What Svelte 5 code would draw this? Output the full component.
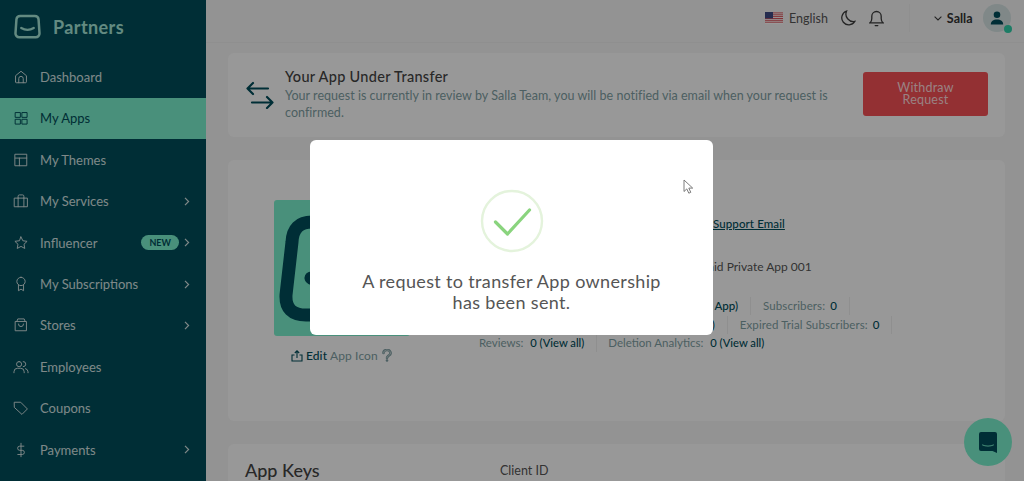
<script>
  const nav = [
    { label: 'Dashboard', icon: 'home' },
    { label: 'My Apps', icon: 'grid', active: true },
    { label: 'My Themes', icon: 'layout' },
    { label: 'My Services', icon: 'case', more: true },
    { label: 'Influencer', icon: 'star', more: true, badge: 'NEW' },
    { label: 'My Subscriptions', icon: 'award', more: true },
    { label: 'Stores', icon: 'bag', more: true },
    { label: 'Employees', icon: 'users' },
    { label: 'Coupons', icon: 'tag' },
    { label: 'Payments', icon: 'dollar', more: true }
  ]

  const icons = {
    home: 'M4 20V10.500L12.500 3.500l8.500 7V20a1.500 1.500 0 0 1-1.500 1.500h-14A1.500 1.500 0 0 1 4 20zM9 21.500V15a3.500 3.500 0 0 1 7 0v6.500',
    grid: 'M4 4h7.500v7.500H4zM14.500 4H22v7.500h-7.500zM4 14.500h7.500V22H4zM14.500 14.500H22V22h-7.500z',
    layout: 'M3.500 3.500h18v18h-18zM3.500 9.500h18M10 9.500v12',
    case: 'M2.500 8h20v13.500h-20zM8 8V5a2 2 0 0 1 2-2h5a2 2 0 0 1 2 2v3M8 8v13.500M17 8v13.500',
    star: 'M12.500 3l2.900 6 6.600.9-4.800 4.600 1.200 6.500-5.900-3.200L6.600 21l1.200-6.500L3 9.900l6.600-.9z',
    award: 'M12.500 2a6.500 6.500 0 1 1 0 13 6.500 6.500 0 0 1 0-13zM8.500 14v9l4-2.500 4 2.500v-9',
    bag: 'M4 7h17v14.500H4zM6 7l1.500-4h10L19 7M8.500 11a4 4 0 0 0 8 0',
    users: 'M9.500 4a4 4 0 1 1 0 8 4 4 0 0 1 0-8zM1.500 21.500v-1.500A5.500 5.500 0 0 1 7 14.500h5a5.500 5.500 0 0 1 5.500 5.500v1.500M16 4a4 4 0 0 1 0 8M19.500 15a5.500 5.500 0 0 1 4 5v1.500',
    tag: 'M2.500 3.500h9.500l10.500 10.500-8.500 8.500L2.500 12z',
    dollar: 'M12.500 2v21M17 6.500H10.500a3 3 0 0 0 0 6.500h4a3 3 0 0 1 0 6.500H7.500'
  }
</script>

<div class="app">
  <aside>
    <div class="brand">
      <svg width="29" height="25" viewBox="0 0 30 26" fill="none">
        <path d="M7.500 2h15a4 4 0 0 1 4 3.600l1 14.400a4 4 0 0 1-4 4.200H6.500a4 4 0 0 1-4-4.200l1-14.400a4 4 0 0 1 4-3.600z" stroke="currentColor" stroke-width="2.600" />
        <path d="M8.500 14.500c4 2.500 9 2.500 13 0" stroke="currentColor" stroke-width="2.400" stroke-linecap="round" />
      </svg>
      <span>Partners</span>
    </div>
    <nav>
      {#each nav as item}
        <div class="item" class:active={item.active}>
          <svg class="ico" width="16" height="16" viewBox="0 0 25 25" fill="none" stroke="currentColor" stroke-width="1.500" stroke-linejoin="round" stroke-linecap="round">
            <path d={icons[item.icon]} />
          </svg>
          <span class="label">{item.label}</span>
          {#if item.badge}<span class="badge">{item.badge}</span>{/if}
          {#if item.more}
            <svg class="chev" width="6" height="9" viewBox="0 0 6 9" fill="none" stroke="currentColor" stroke-width="1.200"><path d="M1 .8l3.600 3.700L1 8.200" /></svg>
          {/if}
        </div>
      {/each}
    </nav>
  </aside>

  <main>
    <header>
      <svg class="flag" width="18" height="12" viewBox="0 0 18 12">
        <rect width="18" height="12" fill="#fff" />
        <path d="M0 .9h18M0 2.800h18M0 4.600h18M0 6.500h18M0 8.300h18M0 10.200h18" stroke="#d8545c" stroke-width="1" />
        <rect width="8" height="6.400" fill="#3e4a84" />
      </svg>
      <span class="lang">English</span>
      <svg class="moon" width="15" height="16" viewBox="0 0 15 16" fill="none" stroke="#3c3c3c" stroke-width="1.300"><path d="M5.500 1.200a7 7 0 1 0 8.300 10.200A7.500 7.500 0 0 1 5.500 1.200z" /></svg>
      <svg class="bell" width="15" height="17" viewBox="0 0 15 17" fill="none" stroke="#3c3c3c" stroke-width="1.300" stroke-linecap="round"><path d="M1 12.800h13c-1.300-1-1.800-2.500-1.800-4.300V6.200a4.700 4.700 0 0 0-9.400 0v2.300c0 1.800-.5 3.300-1.800 4.300zM6.200 15.600h2.600" /></svg>
      <span class="divider"></span>
      <svg class="down" width="8" height="5" viewBox="0 0 8 5" fill="none" stroke="#3c3c3c" stroke-width="1.100"><path d="M.6.700L4 4l3.400-3.300" /></svg>
      <strong>Salla</strong>
      <span class="avatar">
        <svg width="14" height="14" viewBox="0 0 14 14" fill="#004d5a"><circle cx="7" cy="3.800" r="3.300" /><path d="M.8 13.500c0-3.400 2.500-5 6.200-5s6.200 1.600 6.200 5z" /></svg>
        <i></i>
      </span>
    </header>

    <div class="content">
      <section class="card transfer">
        <svg class="arrows" width="28" height="28" viewBox="0 0 28 28" fill="none" stroke="#004d5a" stroke-width="2.200" stroke-linecap="round" stroke-linejoin="round">
          <path d="M22 7.500H1.500M7 2L1.500 7.500 7 13M6 21.500h20.500M21 16l5.500 5.500L21 27" />
        </svg>
        <div class="text">
          <h3>Your App Under Transfer</h3>
          <p>Your request is currently in review by Salla Team, you will be notified via email when your request is confirmed.</p>
        </div>
        <button>Withdraw Request</button>
      </section>

      <section class="card details">
        <div class="side">
          <div class="thumb">
            <svg width="136" height="136" viewBox="0 0 136 136" fill="none" stroke="#004d5a" stroke-width="13" stroke-linecap="round">
              <path d="M38 22h60q19 0 20 20l6 53q1 20-20 20H32q-21 0-20-20l6-53q1-20 20-20z" />
              <path d="M37 78q33 15 66 0" />
            </svg>
          </div>
          <div class="edit">
            <svg width="12" height="12" viewBox="0 0 12 12" fill="none" stroke="#004d5a" stroke-width="1.100"><path d="M3.500 5H1v6h10V5H8.500M6 8V1M3.800 3L6 .8 8.200 3" /></svg>
            <b>Edit</b> <span>App Icon</span>
            <svg class="help" width="10" height="13" viewBox="0 0 10 13" fill="none" stroke-linecap="round">
              <path d="M1.500 4a3.500 3 0 1 1 5.200 2.600C5.500 7.400 5 8 5 9" stroke="#7f9fa3" stroke-width="2.600" />
              <path d="M1.500 4a3.500 3 0 1 1 5.200 2.600C5.500 7.400 5 8 5 9" stroke="#cfdcdd" stroke-width=".8" />
              <circle cx="5" cy="11.500" r="1.300" fill="#7f9fa3" />
            </svg>
          </div>
        </div>
        <div class="info">
          <a href="#support">Support Email</a>
          <div class="name">Paid Private App 001</div>
          <div class="stats r3">
            <span class="cell"><b>(Internal App)</b></span>
            <span class="cell">Subscribers: <b>0</b></span>
          </div>
          <div class="stats r4">
            <span class="cell"><b>0)</b></span>
            <span class="cell">Expired Trial Subscribers: <b>0</b></span>
          </div>
          <div class="stats r5">
            <span class="cell">Reviews: <b>0 (View all)</b></span>
            <span class="cell">Deletion Analytics: <b>0 (View all)</b></span>
          </div>
        </div>
      </section>

      <section class="card keys">
        <h2>App Keys</h2>
        <span>Client ID</span>
      </section>
    </div>
  </main>

  <button class="chat" aria-label="Chat">
    <svg width="18" height="21" viewBox="0 0 18 21" fill="#004d5a">
      <path d="M2 0h14a2 2 0 0 1 2 2v19l-4.500-2H2a2 2 0 0 1-2-2V2a2 2 0 0 1 2-2z" />
      <path d="M3.500 13c3 1.500 8 1.500 11 0" stroke="#7bf1cd" stroke-width="1" fill="none" stroke-linecap="round" />
    </svg>
  </button>

  <div class="overlay">
    <div class="modal">
      <svg class="check" width="64" height="64" viewBox="0 0 64 64" fill="none">
        <circle cx="32" cy="32" r="30" stroke="#e4f3dc" stroke-width="2.400" />
        <path d="M15.500 33l12 12L49.500 21" stroke="#8ad47e" stroke-width="3.200" stroke-linecap="round" stroke-linejoin="round" />
      </svg>
      <p>A request to transfer App ownership<br />has been sent.</p>
      <svg class="cursor" width="12" height="16" viewBox="0 0 12 16">
        <path d="M1 1v11.500l2.800-2.600 2 4.300 2-.9-2-4.200h3.900z" fill="#fff" stroke="#6d6d6d" stroke-width=".9" stroke-linejoin="round" />
      </svg>
    </div>
  </div>
</div>

<style>
  :global(body) {
    margin: 0;
    overflow: hidden;
    font-family: Lato, 'Noto Sans', sans-serif;
  }

  .app {
    position: relative;
    display: flex;
    width: 1024px;
    height: 481px;
    overflow: hidden;
    background: #f5f5f5;
  }

  aside {
    flex: 0 0 206px;
    background: #004d5a;
    color: #d4e3e3;
  }

  .brand {
    display: flex;
    align-items: center;
    gap: 11px;
    height: 56.400px;
    padding: 0 0 3px 13px;
    box-sizing: border-box;
    color: #a6e6d8;
    font-size: 18px;
    font-weight: 700;
    letter-spacing: 0.4px;
  }

  .item {
    display: flex;
    align-items: center;
    height: 41.400px;
    padding: 0 16px 0 13px;
    font-size: 13px;
  }
  .item.active {
    background: #7bf1cd;
    color: #004d5a;
  }
  .ico {
    flex: none;
    margin-right: 11px;
  }
  .label {
    flex: 1;
  }
  .badge {
    margin-right: 5px;
    padding: 2px 8px;
    border-radius: 8px;
    background: #7bf1cd;
    color: #004d5a;
    font-size: 9px;
    font-weight: 700;
    line-height: 11px;
  }

  main {
    flex: 1;
    min-width: 0;
  }

  header {
    display: flex;
    align-items: center;
    height: 43px;
    padding: 0 0 6px 559px;
    box-sizing: border-box;
    border-bottom: 1px solid #eeeeee;
    color: #555;
    font-size: 12.500px;
  }
  .flag {
    margin-right: 6px;
  }
  .lang {
    margin-right: 13px;
  }
  .bell {
    margin-left: 13px;
  }
  .divider {
    width: 1px;
    height: 28px;
    margin: 0 24px 0 25px;
    background: #efefef;
  }
  .down {
    margin-right: 5px;
  }
  strong {
    color: #333;
    font-weight: 700;
  }
  .avatar {
    position: relative;
    display: flex;
    align-items: center;
    justify-content: center;
    width: 28px;
    height: 28px;
    margin-left: 10px;
    border-radius: 50%;
    background: #d5e3e3;
  }
  .avatar i {
    position: absolute;
    right: -1px;
    bottom: -1px;
    width: 8px;
    height: 8px;
    border-radius: 50%;
    background: #2fcfa8;
  }

  .content {
    display: flex;
    flex-direction: column;
    gap: 23px;
    padding: 10px 19px 0 22px;
  }

  .card {
    flex: none;
    border-radius: 6px;
    background: #fefefe;
    box-sizing: border-box;
  }

  .transfer {
    display: flex;
    align-items: center;
    height: 84px;
    padding: 0 17px 0 18px;
  }
  .arrows {
    flex: none;
    margin-right: 11px;
  }
  .text {
    width: 556px;
    margin-top: -1px;
  }
  h3 {
    margin: 0 0 2px;
    color: #444;
    font-size: 14.500px;
    font-weight: 500;
    letter-spacing: 0.3px;
  }
  .text p {
    margin: 0;
    color: #7f9fa3;
    font-size: 12.500px;
    line-height: 17px;
    letter-spacing: 0.03px;
  }
  .transfer button {
    width: 125px;
    height: 44px;
    margin: -2px 0 0 auto;
    padding: 0 24px;
    border: 0;
    border-radius: 3px;
    background: #f65056;
    color: #ffd9da;
    font: inherit;
    font-size: 12.500px;
    line-height: 12.500px;
    letter-spacing: 0.2px;
  }

  .details {
    display: flex;
    height: 261px;
  }
  .side {
    flex: 0 0 251px;
    padding: 40px 0 0 46px;
    box-sizing: border-box;
  }
  .thumb {
    width: 136px;
    height: 136px;
    border-radius: 3px;
    background: #7bf1cd;
    overflow: hidden;
  }
  .thumb svg {
    display: block;
  }
  .edit {
    display: flex;
    align-items: center;
    gap: 3px;
    margin: 12px 0 0 17px;
    color: #7f9fa3;
    font-size: 12px;
    letter-spacing: 0.1px;
  }
  .edit b {
    color: #004d5a;
    font-weight: 500;
  }
  .help {
    margin-left: 1px;
  }

  .info {
    display: flex;
    flex-direction: column;
    color: #7f9fa3;
    font-size: 11.500px;
    letter-spacing: 0.1px;
  }
  a {
    align-self: flex-start;
    margin: 57px 0 0 234px;
    color: #004d5a;
    font-size: 11.500px;
    font-weight: 500;
  }
  .name {
    margin: 29px 0 0 222px;
    color: #555;
    font-size: 12px;
    line-height: 15px;
    letter-spacing: 0;
  }
  .stats {
    display: flex;
    height: 18.500px;
    align-items: center;
    white-space: nowrap;
  }
  .r3 {
    margin-top: 23px;
    padding-left: 191px;
  }
  .r4 {
    padding-left: 226px;
  }
  .cell {
    padding-right: 12px;
    margin-right: 12px;
    border-right: 1px solid #efefef;
    line-height: 18px;
  }
  .r5 {
    letter-spacing: 0;
  }
  .r5 .cell {
    margin-right: 11px;
  }
  .r5 .cell:last-child {
    border-right: 0;
  }
  .cell b {
    margin-left: 2px;
    color: #004d5a;
    font-weight: 500;
    letter-spacing: 0;
  }
  .r5 .cell b {
    margin-left: 4px;
    font-size: 11.200px;
  }
  .r3 .cell:first-child b,
  .r4 .cell:first-child b {
    margin-left: 0;
  }

  .keys {
    display: flex;
    height: 80px;
    padding: 15px 17px;
    align-items: flex-start;
    color: #555;
    font-size: 12.500px;
  }
  h2 {
    flex: 0 0 255px;
    margin: 0;
    color: #444;
    font-size: 18px;
    font-weight: 500;
  }
  .keys span {
    margin-top: 4px;
  }

  .chat {
    position: absolute;
    right: 12px;
    top: 418px;
    display: flex;
    align-items: center;
    justify-content: center;
    width: 48px;
    height: 48px;
    padding: 0;
    border: 0;
    border-radius: 50%;
    background: #7bf1cd;
  }

  .overlay {
    position: absolute;
    inset: 0;
    background: rgba(0, 0, 0, 0.4);
  }
  .modal {
    position: absolute;
    left: 310px;
    top: 140px;
    width: 403px;
    height: 195px;
    border-radius: 6px;
    background: #fff;
    text-align: center;
  }
  .check {
    display: block;
    margin: 49px auto 0;
  }
  .modal p {
    margin: 18px 0 0;
    color: #555;
    font-size: 18px;
    line-height: 21px;
    letter-spacing: 0.35px;
  }
  .cursor {
    position: absolute;
    left: 373px;
    top: 39px;
  }
</style>
